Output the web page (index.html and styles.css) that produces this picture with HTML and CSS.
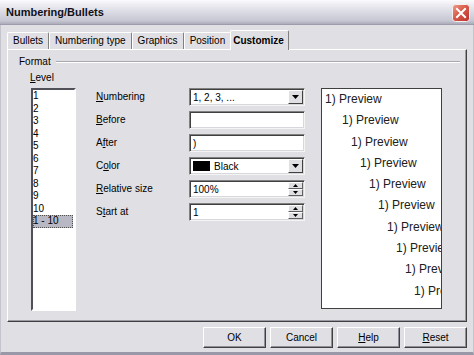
FILE: index.html
```html
<!DOCTYPE html>
<html>
<head>
<meta charset="utf-8">
<link rel="stylesheet" href="styles.css">
</head>
<body>
<div class="dialog">
  <div class="titlebar">
    <span class="title">Numbering/Bullets</span>
    <span class="close">
      <svg width="18" height="18" viewBox="0 0 18 18">
        <defs>
          <linearGradient id="cg" x1="0" y1="0" x2="1" y2="1">
            <stop offset="0" stop-color="#f0a090"/>
            <stop offset="0.45" stop-color="#d85a4a"/>
            <stop offset="1" stop-color="#b83030"/>
          </linearGradient>
        </defs>
        <rect x="0.5" y="0.5" width="17" height="17" rx="3" fill="url(#cg)" stroke="#f4f0f0"/>
        <path d="M5 5 L13 13 M13 5 L5 13" stroke="#fff" stroke-width="2" stroke-linecap="square"/>
      </svg>
    </span>
  </div>
  <div class="body">
    <div class="tabs">
      <div class="tab">Bullets</div>
      <div class="tab">Numbering type</div>
      <div class="tab">Graphics</div>
      <div class="tab">Position</div>
      <div class="tab active">Customize</div>
    </div>
    <div class="panel">
      <div class="group-head"><span>Format</span><span class="rule"></span></div>
      <div class="content">
        <div class="levelcol">
          <div class="lbl"><u>L</u>evel</div>
          <div class="listbox">
            <div class="item">1</div>
            <div class="item">2</div>
            <div class="item">3</div>
            <div class="item">4</div>
            <div class="item">5</div>
            <div class="item">6</div>
            <div class="item">7</div>
            <div class="item">8</div>
            <div class="item">9</div>
            <div class="item">10</div>
            <div class="item sel">1 - 10</div>
          </div>
        </div>
        <div class="form">
          <div class="flabel"><u>N</u>umbering</div>
          <div class="field"><span class="val">1, 2, 3, ...</span><span class="dd"><svg width="7" height="4" viewBox="0 0 7 4"><path d="M0 0H7L3.5 4Z" fill="#000"/></svg></span></div>
          <div class="flabel"><u>B</u>efore</div>
          <div class="field"></div>
          <div class="flabel">A<u>f</u>ter</div>
          <div class="field"><span class="val">)</span></div>
          <div class="flabel">C<u>o</u>lor</div>
          <div class="field"><span class="swatch"></span><span class="val">Black</span><span class="dd"><svg width="7" height="4" viewBox="0 0 7 4"><path d="M0 0H7L3.5 4Z" fill="#000"/></svg></span></div>
          <div class="flabel"><u>R</u>elative size</div>
          <div class="field"><span class="val">100%</span><span class="spin"><span class="sb"><svg width="5" height="3" viewBox="0 0 5 3"><path d="M0 3H5L2.5 0Z" fill="#000"/></svg></span><span class="sb"><svg width="5" height="3" viewBox="0 0 5 3"><path d="M0 0H5L2.5 3Z" fill="#000"/></svg></span></span></div>
          <div class="flabel">S<u>t</u>art at</div>
          <div class="field"><span class="val">1</span><span class="spin"><span class="sb"><svg width="5" height="3" viewBox="0 0 5 3"><path d="M0 3H5L2.5 0Z" fill="#000"/></svg></span><span class="sb"><svg width="5" height="3" viewBox="0 0 5 3"><path d="M0 0H5L2.5 3Z" fill="#000"/></svg></span></span></div>
        </div>
        <div class="preview">
          <div class="pl l0">1) Preview</div>
          <div class="pl l1">1) Preview</div>
          <div class="pl l2">1) Preview</div>
          <div class="pl l3">1) Preview</div>
          <div class="pl l4">1) Preview</div>
          <div class="pl l5">1) Preview</div>
          <div class="pl l6">1) Preview</div>
          <div class="pl l7">1) Preview</div>
          <div class="pl l8">1) Preview</div>
          <div class="pl l9">1) Preview</div>
        </div>
      </div>
    </div>
    <div class="buttons">
      <div class="btn">OK</div>
      <div class="btn">Cancel</div>
      <div class="btn"><u>H</u>elp</div>
      <div class="btn"><u>R</u>eset</div>
    </div>
  </div>
</div>
</body>
</html>
```

FILE: styles.css
```css
* { box-sizing: border-box; }
html, body { margin: 0; padding: 0; }
body {
  font-family: "Liberation Sans", Arial, sans-serif;
  font-size: 10px;
  color: #000;
  background: #e0dfe3;
}
.dialog {
  width: 474px;
  height: 355px;
  background: #e0dfe3;
  display: flex;
  flex-direction: column;
  overflow: hidden;
}
.titlebar {
  height: 25px;
  flex: none;
  display: flex;
  align-items: center;
  justify-content: space-between;
  padding: 0 4px 0 6px;
  background: linear-gradient(to bottom, #fbfbfd 0%, #ececf2 20%, #d8d8e2 55%, #c8c8d4 85%, #acacbc 100%);
  border-bottom: 1px solid #9c9cac;
}
.title {
  font-weight: bold;
  font-size: 11px;
  color: #101018;
}
.close { display: flex; margin-top: 1px; }
.body {
  flex: 1;
  display: flex;
  flex-direction: column;
  padding: 5px 6px 0 6px;
  border-left: 1px solid #c4c4cc;
  border-right: 1px solid #c4c4cc;
  border-bottom: 3px solid #9898a8;
}
.tabs {
  display: flex;
  align-items: flex-end;
  height: 19px;
  position: relative;
  z-index: 1;
}
.tab {
  height: 17px;
  line-height: 16px;
  padding: 0 5px;
  border-top: 1px solid #fff;
  border-left: 1px solid #fff;
  border-right: 1px solid #808080;
  background: #e0dfe3;
  border-radius: 2px 2px 0 0;
}
.tab.active {
  height: 20px;
  line-height: 19px;
  font-weight: bold;
  margin-bottom: -1px;
  margin-left: -1px;
  padding: 0 4px 0 2px;
}
.panel {
  height: 273px;
  flex: none;
  border: 1px solid;
  border-color: #fff #404040 #404040 #fff;
  box-shadow: inset -1px -1px #9a9aa4;
}
.group-head {
  display: flex;
  align-items: center;
  margin-top: 6px;
  height: 12px;
  line-height: 12px;
  padding-left: 11px;
  padding-right: 6px;
}
.rule {
  flex: 1;
  margin-left: 5px;
  border-top: 1px solid #a8a8b0;
  border-bottom: 1px solid #fff;
}
.content {
  display: flex;
  align-items: flex-start;
  padding: 4px 0 0 23px;
}
.levelcol { width: 45px; }
.lbl { line-height: 12px; margin-left: -1px; }
.listbox {
  margin-top: 4px;
  height: 223px;
  background: #fff;
  border: 2px solid;
  border-color: #505058 #fff #fff #505058;
}
.item { line-height: 12.5px; }
.item.sel {
  background: #b8b8c4;
  outline: 1px dotted #505050;
  outline-offset: -1px;
  margin-right: 1px;
}
.form {
  margin-left: 20px;
  margin-top: 16px;
  display: grid;
  grid-template-columns: 93px 116px;
  grid-auto-rows: 18px;
  row-gap: 5px;
  align-items: center;
}
.flabel { line-height: 12px; }
.field {
  height: 18px;
  background: #fff;
  border: 1px solid;
  border-color: #808080 #f4f4f4 #f4f4f4 #808080;
  box-shadow: inset 1px 1px #404040, inset -1px -1px #d8d8dc;
  display: flex;
  align-items: center;
  padding: 2px 1px 2px 3px;
}
.val { flex: 1; white-space: nowrap; }
.swatch {
  width: 17px;
  height: 10px;
  background: #000;
  margin-right: 4px;
  flex: none;
}
.dd, .spin {
  flex: none;
  width: 15px;
  height: 14px;
  display: flex;
}
.dd {
  align-items: center;
  justify-content: center;
  background: #e0dfe3;
  border: 1px solid;
  border-color: #fff #404040 #404040 #fff;
}
.spin { flex-direction: column; }
.sb {
  flex: 1;
  display: flex;
  align-items: center;
  justify-content: center;
  background: #e0dfe3;
  border: 1px solid;
  border-color: #fff #606060 #606060 #fff;
}
.preview {
  margin-left: 16px;
  margin-top: 16px;
  width: 121px;
  height: 221px;
  background: #fff;
  border: 1px solid #404040;
  overflow: hidden;
  font-size: 12px;
  color: #202020;
}
.pl { line-height: 21.3px; white-space: nowrap; padding-left: 3px; }
.l1 { padding-left: 20px; }
.l2 { padding-left: 29px; }
.l3 { padding-left: 38px; }
.l4 { padding-left: 47px; }
.l5 { padding-left: 56px; }
.l6 { padding-left: 65px; }
.l7 { padding-left: 74px; }
.l8 { padding-left: 83px; }
.l9 { padding-left: 92px; }
.buttons {
  display: flex;
  justify-content: flex-end;
  gap: 4px;
  margin-top: 5px;
}
.btn {
  width: 63px;
  height: 21px;
  line-height: 19px;
  text-align: center;
  border: 1px solid;
  border-color: #fff #404040 #404040 #fff;
  box-shadow: inset -1px -1px #909098;
  background: #e0dfe3;
}
```
